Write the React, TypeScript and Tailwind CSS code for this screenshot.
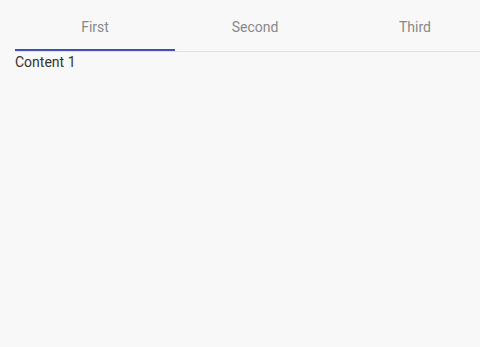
import { useState } from 'react'

const TABS = ['First', 'Second', 'Third']

export default function App() {
  const [active, setActive] = useState(0)

  return (
    <div className="h-[347px] w-[480px] overflow-hidden bg-[#f8f8f8] pl-[15px] font-['Roboto',sans-serif] text-sm">
      <div className="flex w-[480px] border-b border-[#e0e0e0]">
        {TABS.map((t, i) => (
          <button
            key={t}
            onClick={() => setActive(i)}
            className="relative h-[51px] w-[160px] shrink-0 pt-[2px] text-center text-sm text-[#888888]"
          >
            {t}
            {active === i && <span className="absolute bottom-0 left-0 h-[2px] w-full bg-[#3f51b5]" />}
          </button>
        ))}
      </div>
      <div className="text-[#333333]">Content {active + 1}</div>
    </div>
  )
}
